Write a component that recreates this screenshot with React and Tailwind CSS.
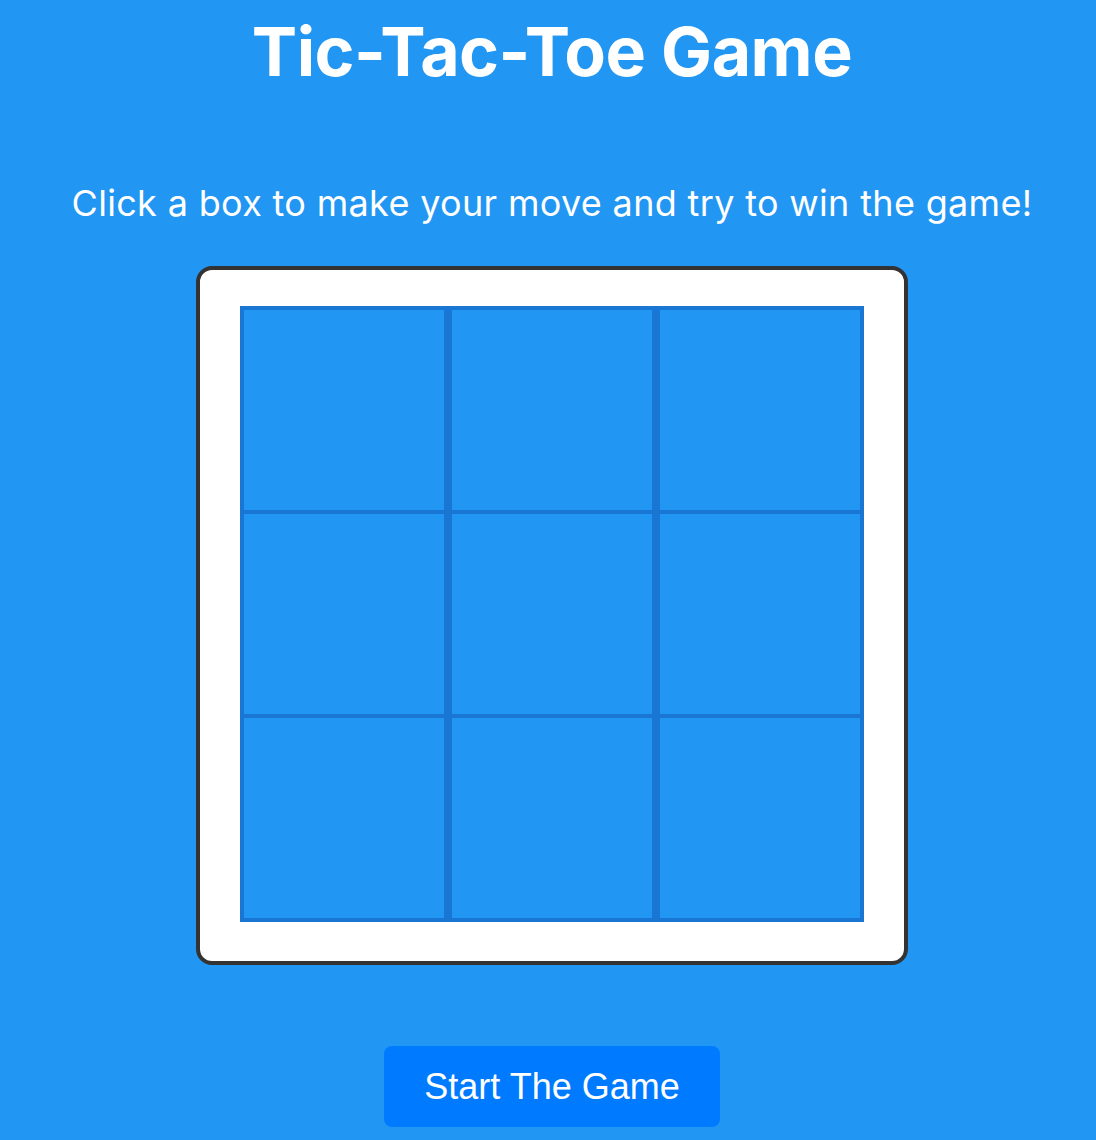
import React, { useState } from "react";

const Cell = ({ value, onClick }) => (
  <button
    onClick={onClick}
    className="w-[208px] h-[204px] border-x-4 border-t-4 border-[#1976D2] bg-[#2196F3] flex items-center justify-center text-white text-[120px] font-bold"
  >
    {value}
  </button>
);

export default function App() {
  const [board, setBoard] = useState(Array(9).fill(null));
  const [xNext, setXNext] = useState(true);

  const handleClick = (i) => {
    if (board[i]) return;
    const next = board.slice();
    next[i] = xNext ? "X" : "O";
    setBoard(next);
    setXNext(!xNext);
  };

  return (
    <div
      className="min-h-[1140px] w-full bg-[#2196F3] flex flex-col items-center pl-2 text-white"
      style={{ fontFamily: "Inter, 'Noto Sans', sans-serif" }}
    >
      <h1 className="pt-[1px] text-[68px] leading-[100px] font-bold tracking-[-0.5px]">
        Tic-Tac-Toe Game
      </h1>

      <p className="mt-[77px] text-[36px] leading-[50px] tracking-[0.33px]">
        Click a box to make your move and try to win the game!
      </p>

      {/* Board */}
      <div className="mt-[38px] bg-white border-4 border-[#333] rounded-2xl px-10 pt-[36px] pb-[39px]">
        <div className="grid grid-cols-3 border-b-4 border-[#1976D2]">
          {board.map((v, i) => (
            <Cell key={i} value={v} onClick={() => handleClick(i)} />
          ))}
        </div>
      </div>

      <button
        onClick={() => {
          setBoard(Array(9).fill(null));
          setXNext(true);
        }}
        className="mt-[81px] w-[336px] h-[81px] rounded-lg bg-[#007BFF] text-white text-[36px]"
        style={{ fontFamily: "'Liberation Sans', Arial, sans-serif" }}
      >
        Start The Game
      </button>
    </div>
  );
}
